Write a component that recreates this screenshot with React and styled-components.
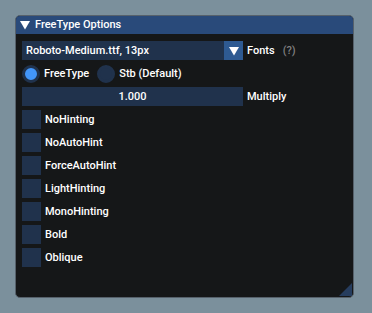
import React from 'react';
import styled, { createGlobalStyle } from 'styled-components';

const GlobalStyle = createGlobalStyle`
    body {
        margin: 0;
        background: #7b909c;
        font-family: Roboto, "Liberation Sans", sans-serif;
    }
`

const flags = ['NoHinting', 'NoAutoHint', 'ForceAutoHint', 'LightHinting', 'MonoHinting', 'Bold', 'Oblique']

const Arrow = ({ size }) => (
    <svg width={size} height={size} viewBox="0 0 10 10">
        <polygon points="0,1 10,1 5,9.5" fill="#fff" />
    </svg>
)

const App = () => {
    return (
        <>
            <GlobalStyle />
            <Page>
                <Window>
                    <TitleBar>
                        <TitleArrow><Arrow size={10} /></TitleArrow>
                        FreeType Options
                    </TitleBar>
                    <Content>
                        <Row>
                            <Combo>
                                <ComboText>Roboto-Medium.ttf, 13px</ComboText>
                                <ComboButton>
                                    <Arrow size={10} />
                                </ComboButton>
                            </Combo>
                            <Label>Fonts</Label>
                            <Help>(?)</Help>
                        </Row>
                        <Row>
                            <Radio checked />
                            <Label after={8}>FreeType</Label>
                            <Radio />
                            <Label>Stb (Default)</Label>
                        </Row>
                        <Row>
                            <Drag>1.000</Drag>
                            <Label>Multiply</Label>
                        </Row>
                        {flags.map(f => (
                            <Row key={f}>
                                <Check />
                                <CheckLabel>{f}</CheckLabel>
                            </Row>
                        ))}
                    </Content>
                    <Grip>
                        <svg width="13" height="13" viewBox="0 0 13 13">
                            <polygon points="13,0 13,13 0,13" fill="#263d5e" />
                        </svg>
                    </Grip>
                </Window>
            </Page>
        </>
    )
}

export default App;

const Page = styled.div`
    width: 372px;
    height: 313px;
    padding: 15px 0 0 15px;
    box-sizing: border-box;
`

const Window = styled.div`
    position: relative;
    width: 339px;
    height: 283px;
    box-sizing: border-box;
    background: #151718;
    border: 1px solid #56616b;
    border-radius: 5px;
    overflow: hidden;
`

const TitleBar = styled.div`
    height: 19px;
    margin: -1px -1px 0 -1px;
    background: #294a7a;
    color: #fff;
    font-size: 11px;
    font-weight: 500;
    line-height: 19px;
    display: flex;
    align-items: center;
    padding-left: 5px;
`

const TitleArrow = styled.span`
    width: 15px;
    display: flex;
    align-items: center;
`

const Content = styled.div`
    display: flex;
    flex-direction: column;
    gap: 4px;
    padding: 7px 0 0 6px;
`

const Row = styled.div`
    display: flex;
    align-items: center;
    height: 19px;
    color: #fff;
    font-size: 11px;
    font-weight: 500;
`

const Combo = styled.div`
    width: 221px;
    height: 19px;
    display: flex;
    background: #20324c;
`

const ComboText = styled.div`
    flex: 1;
    padding-left: 4px;
    line-height: 19px;
`

const ComboButton = styled.div`
    width: 19px;
    height: 19px;
    background: #2e5a92;
    display: flex;
    align-items: center;
    justify-content: center;
`

const Label = styled.span`
    margin-left: 4px;
    margin-right: ${p => p.after || 0}px;
    line-height: 19px;
`

const Help = styled.span`
    color: #808080;
    margin-left: 8px;
`

const Radio = styled.span`
    width: 18px;
    height: 18px;
    border-radius: 50%;
    box-sizing: border-box;
    border: 3px solid #20324c;
    background-color: ${p => p.checked ? '#4296fa' : '#20324c'};
    flex-shrink: 0;
`

const Drag = styled.div`
    width: 221px;
    height: 19px;
    background: #20324c;
    text-align: center;
    line-height: 19px;
`

const Check = styled.span`
    width: 19px;
    height: 19px;
    background: #20324c;
    flex-shrink: 0;
`

const CheckLabel = styled.span`
    margin-left: 4px;
`

const Grip = styled.div`
    position: absolute;
    right: 1px;
    bottom: 1px;
    width: 13px;
    height: 13px;
    line-height: 0;
`
